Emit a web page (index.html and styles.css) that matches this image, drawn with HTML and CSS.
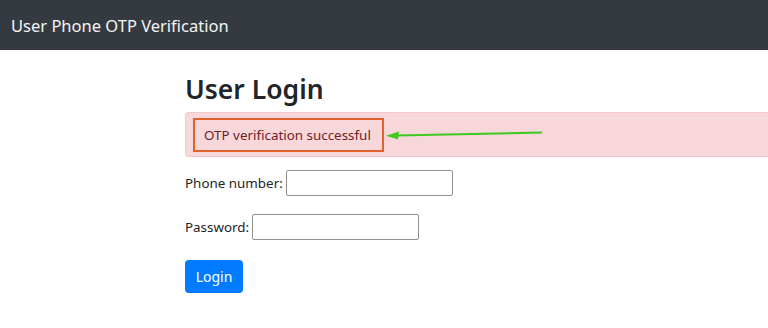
FILE: index.html
```html
<html>
<head>
<title>User Phone OTP Verification</title>
<link rel="stylesheet" href="styles.css">
</head>
<body>
  <div class="navbar">User Phone OTP Verification</div>
  <div class="main">
    <h2 class="title">User Login</h2>
    <div class="alert">
      <span class="highlight">OTP verification successful</span>
      <svg class="arrow" width="160" height="12" viewBox="0 0 160 12">
        <line x1="10" y1="6.5" x2="156" y2="3.5" stroke="#3fc91f" stroke-width="2"/>
        <polygon points="0,6.8 13,2.5 12,10.5" fill="#3fc91f"/>
      </svg>
    </div>
    <form class="login">
      <div class="row">
        <label>Phone number:</label>
        <input type="text" class="field">
      </div>
      <div class="row">
        <label>Password:</label>
        <input type="password" class="field">
      </div>
      <button type="button" class="btn">Login</button>
    </form>
  </div>
</body>
</html>
```

FILE: styles.css
```css
body {margin: 0;
      font-family: "Noto Sans", "Open Sans", sans-serif;
      color: #212529;
      background: #fff;}
.navbar {height: 50px;
         box-sizing: border-box;
         background-color: #343a40;
         color: #f4f4f4;
         font-size: 16.5px;
         padding: 14px 11px 12px;
         line-height: 24px;}
.main {padding: 21px 0 0 185px;}
.title {margin: 0 0 5px 0;
        font-size: 26.5px;
        font-weight: 600;
        line-height: 36px;}
.alert {display: flex;
        align-items: center;
        gap: 2px;
        background-color: #f8d7da;
        border: 1px solid #f5c6cb;
        border-right: none;
        border-radius: 4px 0 0 4px;
        padding: 5px 0 4px 7px;
        color: #721c24;
        font-size: 13.4px;}
.highlight {border: 2px solid #e2622c;
            padding: 5px 11px 5px 9px;
            line-height: 20px;}
.arrow {display: block;}
.login {margin-top: 13px;
        font-size: 13.4px;}
.row {display: flex;
      align-items: center;
      gap: 3px;
      height: 26px;
      margin-bottom: 18px;}
.field {width: 167px;
        height: 26px;
        box-sizing: border-box;
        border: 1px solid #8f8f8f;
        border-radius: 2px;}
.btn {margin-top: 2px;
      width: 58px;
      height: 33px;
      background-color: #007bff;
      color: #fff;
      border: none;
      border-radius: 4px;
      font-family: inherit;
      font-size: 14px;}
```
